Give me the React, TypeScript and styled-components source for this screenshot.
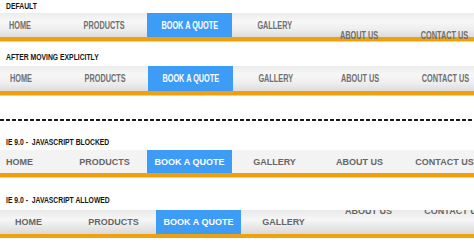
import React from 'react';
import styled, { createGlobalStyle, css } from 'styled-components';

const GlobalStyle = createGlobalStyle`
  html, body {
    margin: 0;
    padding: 0;
    background: #ffffff;
  }
  body {
    width: 474px;
    height: 246px;
    overflow: hidden;
  }
`;

type Variant = 'condensed' | 'plain';

interface MenuItem {
  label: string;
  shift?: number;
}

interface Demo {
  title: string;
  variant: Variant;
  offset: number;
  gapTop: number;
  labelGap: number;
  barHeight: number;
  clip?: boolean;
  items: MenuItem[];
}

const names = ['HOME', 'PRODUCTS', 'BOOK A QUOTE', 'GALLERY', 'ABOUT US', 'CONTACT US'];

const demosTop: Demo[] = [
  {
    title: 'DEFAULT',
    variant: 'condensed',
    offset: -23,
    gapTop: 0,
    labelGap: 0,
    barHeight: 24,
    items: names.map((label, i) => ({ label, shift: i > 3 ? 10 : 0 })),
  },
  {
    title: 'AFTER MOVING EXPLICITLY',
    variant: 'condensed',
    offset: -22,
    gapTop: 10,
    labelGap: 2,
    barHeight: 25,
    items: names.map((label) => ({ label })),
  },
];

const demosBottom: Demo[] = [
  {
    title: 'IE 9.0 -  JAVASCRIPT BLOCKED',
    variant: 'plain',
    offset: -23,
    gapTop: 15,
    labelGap: 1,
    barHeight: 23,
    items: names.map((label) => ({ label })),
  },
  {
    title: 'IE 9.0 -  JAVASCRIPT ALLOWED',
    variant: 'plain',
    offset: -14,
    gapTop: 17,
    labelGap: 3,
    barHeight: 24,
    clip: true,
    items: names.map((label, i) => ({ label, shift: i > 3 ? -11 : 0 })),
  },
];

const Page = styled.div`
  width: 474px;
  overflow: hidden;
`;

const Section = styled.section<{ $gapTop: number }>`
  margin-top: ${(p) => p.$gapTop}px;
`;

const Caption = styled.div<{ $gap: number }>`
  height: 13px;
  line-height: 13px;
  padding-left: 6px;
  margin-bottom: ${(p) => p.$gap}px;
  font-family: 'Liberation Sans', Arial, sans-serif;
  font-weight: 700;
  font-size: 8.5px;
  color: #151515;
  white-space: pre;

  span {
    display: inline-block;
    transform: scaleX(0.8);
    transform-origin: left center;
  }
`;

const Bar = styled.nav<{ $variant: Variant; $height: number; $clip?: boolean }>`
  height: ${(p) => p.$height}px;
  border-bottom: 4px solid #f0a00a;
  box-shadow: 0 1px 0 #f7d27a;
  overflow: ${(p) => (p.$clip ? 'hidden' : 'visible')};
  ${(p) =>
    p.$variant === 'condensed'
      ? css`
          background: linear-gradient(#ececec 0%, #f7f7f7 35%, #ededed 70%, #dcdcdc 100%);
        `
      : css`
          background: #f3f3f3;
        `}
  ${(p) =>
    p.$clip &&
    css`
      background: linear-gradient(#e9e9e9 0%, #f6f6f6 40%, #e6e6e6 75%, #d9d9d9 100%);
    `}
`;

const Menu = styled.ul<{ $offset: number }>`
  display: flex;
  margin: 0 0 0 ${(p) => p.$offset}px;
  padding: 0;
  height: 100%;
  list-style: none;
  width: 540px;
`;

const Tab = styled.li<{ $active: boolean; $variant: Variant; $shift: number }>`
  flex: 0 0 85px;
  height: 100%;
  display: flex;
  align-items: center;
  justify-content: center;
  white-space: nowrap;
  background: ${(p) => (p.$active ? '#3d9cf5' : 'transparent')};
  color: ${(p) => (p.$active ? '#ffffff' : '#6f6f6f')};
  font-weight: 700;
  font-family: 'Liberation Sans', Arial, sans-serif;

  span {
    display: block;
    margin-top: ${(p) => p.$shift * 2}px;
  }

  ${(p) =>
    p.$variant === 'condensed'
      ? css`
          font-size: 10px;
          span {
            transform: scaleX(0.73);
          }
        `
      : css`
          font-size: 9px;
          color: ${p.$active ? '#ffffff' : '#666666'};
        `}
`;

const Dashes = styled.div`
  height: 2px;
  margin-top: 24px;
  background: repeating-linear-gradient(90deg, #1a1a1a 0 4px, transparent 4px 6px);
`;

const NavDemo = ({ demo }: { demo: Demo }) => (
  <Section $gapTop={demo.gapTop}>
    <Caption $gap={demo.labelGap}>
      <span>{demo.title}</span>
    </Caption>
    <Bar $variant={demo.variant} $height={demo.barHeight} $clip={demo.clip}>
      <Menu $offset={demo.offset}>
        {demo.items.map((item) => (
          <Tab
            key={item.label}
            $active={item.label === 'BOOK A QUOTE'}
            $variant={demo.variant}
            $shift={item.shift ?? 0}
          >
            <span>{item.label}</span>
          </Tab>
        ))}
      </Menu>
    </Bar>
  </Section>
);

export default function App() {
  return (
    <Page>
      <GlobalStyle />
      {demosTop.map((d) => (
        <NavDemo key={d.title} demo={d} />
      ))}
      <Dashes />
      {demosBottom.map((d) => (
        <NavDemo key={d.title} demo={d} />
      ))}
    </Page>
  );
}
